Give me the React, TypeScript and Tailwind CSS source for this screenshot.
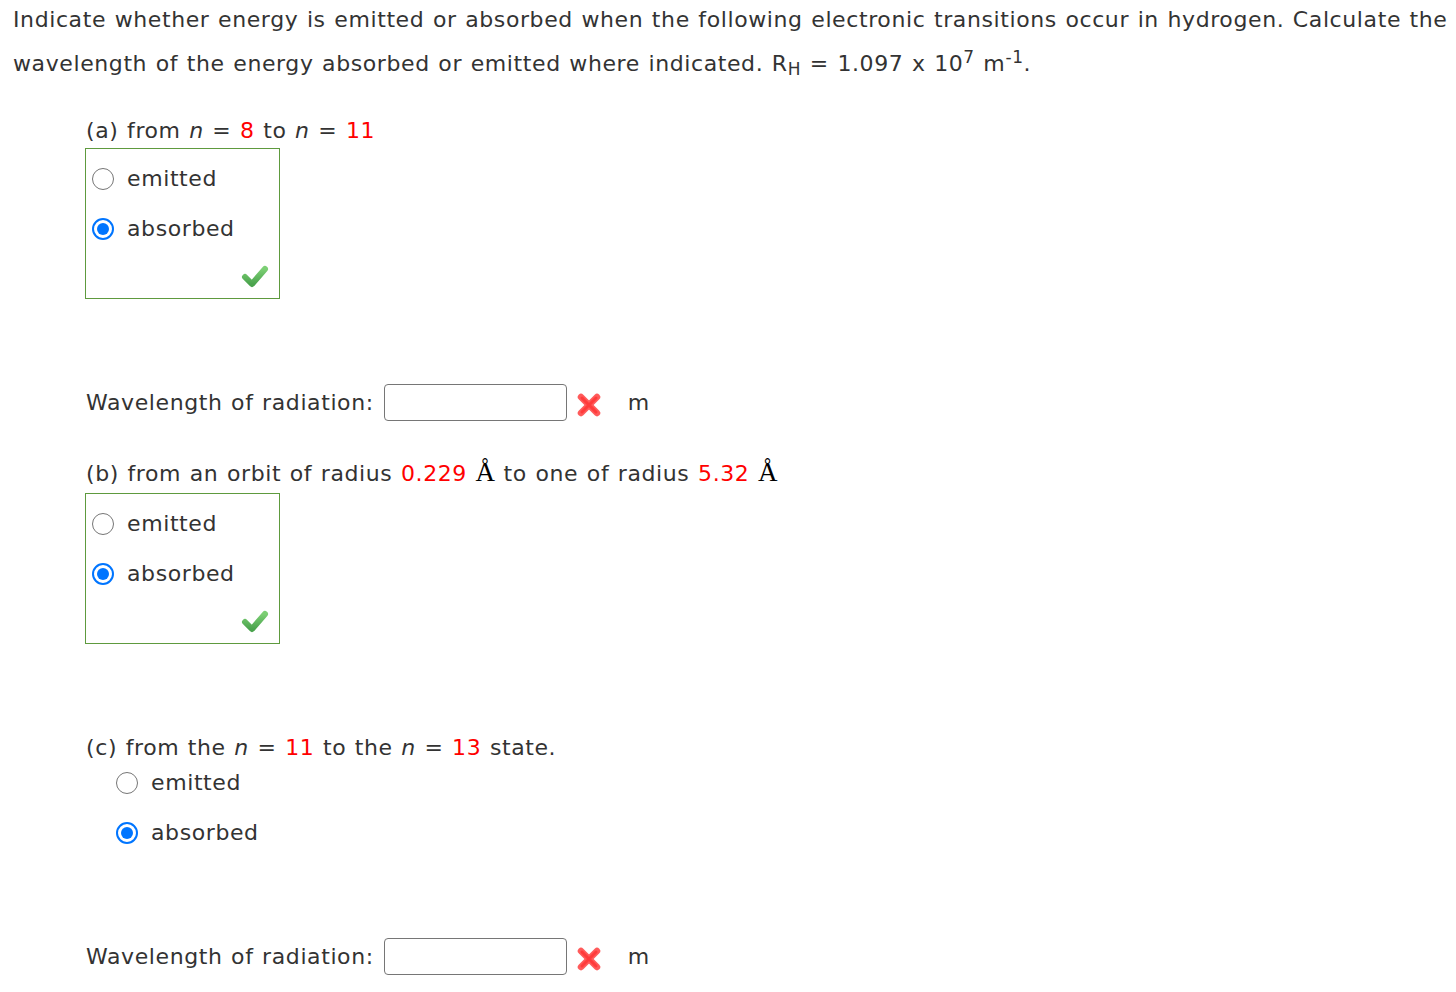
import React from 'react';

const font = {
  fontFamily: '"DejaVu Sans", Verdana, sans-serif',
  letterSpacing: '0.6px',
  wordSpacing: '1px',
};

const Red: React.FC<{ children: React.ReactNode }> = ({ children }) => (
  <span className="text-[#ff0000]">{children}</span>
);

const Angstrom = () => (
  <span
    className="text-[27px] leading-none text-black"
    style={{ fontFamily: '"Liberation Serif", serif', letterSpacing: 0 }}
  >
    Å
  </span>
);

const Radio: React.FC<{ checked?: boolean }> = ({ checked }) =>
  checked ? (
    <span className="inline-flex h-[22px] w-[22px] shrink-0 items-center justify-center rounded-full border-[2px] border-[#0075ff] bg-white">
      <span className="h-[12px] w-[12px] rounded-full bg-[#0075ff]" />
    </span>
  ) : (
    <span className="inline-block h-[22px] w-[22px] shrink-0 rounded-full border-[1.5px] border-[#767676] bg-white" />
  );

const Check = () => (
  <svg width="28" height="24" viewBox="0 0 28 24">
    <defs>
      <linearGradient id="cg" x1="0" y1="0" x2="0" y2="1">
        <stop offset="0" stopColor="#7ccf74" />
        <stop offset="1" stopColor="#4aa34d" />
      </linearGradient>
    </defs>
    <polyline
      points="4,13 11,20 24,5"
      fill="none"
      stroke="url(#cg)"
      strokeWidth="6"
      strokeLinecap="round"
      strokeLinejoin="round"
    />
  </svg>
);

const Cross = () => (
  <svg width="26" height="26" viewBox="0 0 26 26">
    <g stroke="#ff5a5a" strokeWidth="6.5" strokeLinecap="round">
      <line x1="5" y1="5" x2="21" y2="21" />
      <line x1="21" y1="5" x2="5" y2="21" />
    </g>
    <g stroke="#ff3b3b" strokeWidth="3" strokeLinecap="round">
      <line x1="6" y1="6" x2="20" y2="20" />
      <line x1="20" y1="6" x2="6" y2="20" />
    </g>
  </svg>
);

const Option: React.FC<{ label: string; checked?: boolean }> = ({ label, checked }) => (
  <div className="flex h-[33px] items-center gap-[13px]">
    <Radio checked={checked} />
    <span>{label}</span>
  </div>
);

const ChoiceBox = () => (
  <div className="flex h-[151px] w-[195px] flex-col border border-[#5e9a3e] pl-[6px] pr-[10px] pt-[13px]">
    <Option label="emitted" />
    <div className="mt-[17px]">
      <Option label="absorbed" checked />
    </div>
    <div className="mt-[19px] flex justify-end">
      <Check />
    </div>
  </div>
);

const WavelengthRow = () => (
  <div className="flex h-[37px] items-center">
    <span>Wavelength of radiation:</span>
    <span className="ml-[10px] h-[37px] w-[183px] rounded-[4px] border border-[#767676] bg-white" />
    <span className="ml-[9px] mt-[4px] flex items-center">
      <Cross />
    </span>
    <span className="ml-[26px]">m</span>
  </div>
);

export default function App() {
  return (
    <div className="min-h-screen overflow-hidden bg-white text-[22px] text-[#333333]" style={font}>
      <div className="-mt-[2px] whitespace-nowrap px-[13px] leading-[44px]">
        <p>
          Indicate whether energy is emitted or absorbed when the following electronic transitions occur in
          hydrogen. Calculate the
          <br />
          wavelength of the energy absorbed or emitted where indicated. R
          <sub className="text-[17px]">H</sub> = 1.097 x 10<sup className="text-[17px]">7</sup> m
          <sup className="text-[17px]">-1</sup>.
        </p>
      </div>

      <div className="pl-[86px] pt-[30px]">
        <div className="h-[30px] leading-[30px]">
          (a) from <i>n</i> = <Red>8</Red> to <i>n</i> = <Red>11</Red>
        </div>
        <div className="mt-[2px] -ml-[1px]">
          <ChoiceBox />
        </div>

        <div className="mt-[85px]">
          <WavelengthRow />
        </div>

        <div className="mt-[38px] h-[30px] leading-[30px]">
          (b) from an orbit of radius <Red>0.229</Red> <Angstrom /> to one of radius <Red>5.32</Red>{' '}
          <Angstrom />
        </div>
        <div className="mt-[4px] -ml-[1px]">
          <ChoiceBox />
        </div>

        <div className="mt-[89px] h-[30px] leading-[30px]">
          (c) from the <i>n</i> = <Red>11</Red> to the <i>n</i> = <Red>13</Red> state.
        </div>
        <div className="ml-[30px] mt-[3px] flex flex-col gap-[17px]">
          <Option label="emitted" />
          <Option label="absorbed" checked />
        </div>

        <div className="mt-[89px]">
          <WavelengthRow />
        </div>
      </div>
    </div>
  );
}
